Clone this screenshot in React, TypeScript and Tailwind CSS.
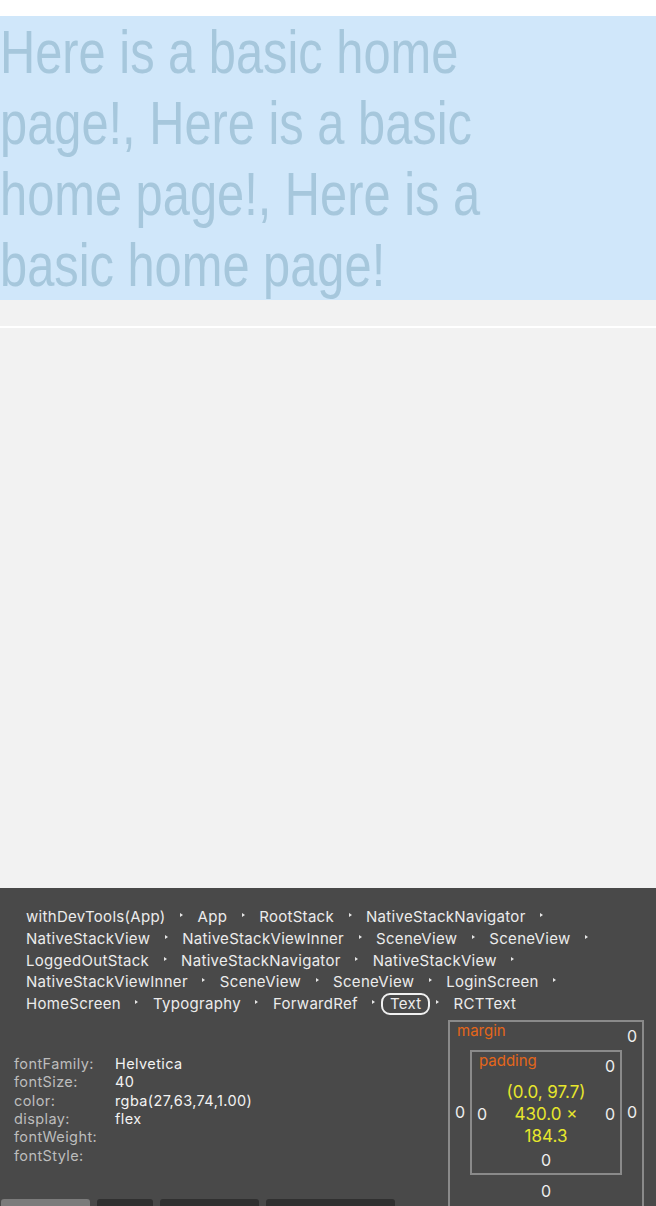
import React from "react";

const crumbs = [
  "withDevTools(App)",
  "App",
  "RootStack",
  "NativeStackNavigator",
  "NativeStackView",
  "NativeStackViewInner",
  "SceneView",
  "SceneView",
  "LoggedOutStack",
  "NativeStackNavigator",
  "NativeStackView",
  "NativeStackViewInner",
  "SceneView",
  "SceneView",
  "LoginScreen",
  "HomeScreen",
  "Typography",
  "ForwardRef",
  "Text",
  "RCTText",
];

const selected = 18;

const styleRows: [string, string][] = [
  ["fontFamily:", "Helvetica"],
  ["fontSize:", "40"],
  ["color:", "rgba(27,63,74,1.00)"],
  ["display:", "flex"],
  ["fontWeight:", ""],
  ["fontStyle:", ""],
];

function Separator() {
  return (
    <span className="w-[14px] flex justify-center pt-[7px] self-start">
      <svg width="3" height="4" viewBox="0 0 3 4">
        <path d="M0 0 L3 2 L0 4 Z" fill="#e6e6e6" />
      </svg>
    </span>
  );
}

function Breadcrumbs() {
  return (
    <div className="flex flex-wrap pl-[17px] pr-[16px] pt-[18px]">
      {crumbs.map((name, i) => (
        <div key={i} className="flex">
          <span
            className={
              "border-2 rounded-[9px] px-[7px] text-[15px] leading-[17.75px] tracking-[0.3px] text-[#ececec] " +
              (i === selected ? "border-[#f0f0f0]" : "border-transparent")
            }
          >
            {name}
          </span>
          {i < crumbs.length - 1 && <Separator />}
        </div>
      ))}
    </div>
  );
}

function BoxModel() {
  return (
    <div className="w-[196px] h-[192px] mr-[12px] mt-[5px] border-2 border-[#8a8a8a] flex flex-col text-[16px] text-[#eeeeee] shrink-0">
      <div className="h-[28px] flex">
        <span className="pl-[7px] leading-[18px] text-[15px] text-[#e4661a]">margin</span>
        <span className="ml-auto w-[20px] self-center text-center leading-[18px]">0</span>
      </div>
      <div className="flex">
        <div className="w-[20px] flex items-center justify-center">0</div>
        <div className="w-[152px] h-[125px] border-2 border-[#8a8a8a] flex flex-col">
          <div className="h-[29px] flex">
            <span className="pl-[7px] leading-[18px] text-[15px] text-[#e4661a]">padding</span>
            <span className="ml-auto w-[20px] self-center text-center leading-[18px]">0</span>
          </div>
          <div className="flex">
            <div className="w-[20px] flex items-center justify-center">0</div>
            <div className="flex-1 flex flex-col items-center text-[17px] leading-[22px] text-[#e6e62c]">
              <span>(0.0, 97.7)</span>
              <span>430.0 ×</span>
              <span>184.3</span>
            </div>
            <div className="w-[20px] flex items-center justify-center">0</div>
          </div>
          <div className="flex-1 flex items-center justify-center">0</div>
        </div>
        <div className="w-[20px] flex items-center justify-center">0</div>
      </div>
      <div className="h-[32px] flex items-center justify-center">0</div>
    </div>
  );
}

export default function App() {
  return (
    <div className="w-[656px] h-[1206px] overflow-hidden flex flex-col bg-[#f2f2f2]">
      <div className="h-[16px] bg-white shrink-0" />
      <div className="bg-[#d0e7fa] h-[284px] overflow-hidden shrink-0">
        <p className="w-[680px] origin-top-left scale-x-[0.787] text-[62px] leading-[71px] text-[#a6c7dc] font-['Liberation_Sans',Arial,sans-serif]">
          Here is a basic home page!, Here is a basic home page!, Here is a basic home page!
        </p>
      </div>
      <div className="h-[26px] shrink-0" />
      <div className="h-[1.5px] bg-white shrink-0" />
      <div className="flex-1" />
      <div className="h-[318px] shrink-0 bg-[#494949] flex flex-col font-['Inter','Noto_Sans',sans-serif]">
        <Breadcrumbs />
        <div className="flex flex-1">
          <div className="flex-1 flex flex-col pt-[40px]">
            <div className="pl-[14px] grid grid-cols-[101px_1fr] text-[14.5px] leading-[18.4px] tracking-[0.4px]">
              {styleRows.map(([k, v]) => (
                <React.Fragment key={k}>
                  <span className="text-[#bdbdbd]">{k}</span>
                  <span className="text-[#f2f2f2]">{v}</span>
                </React.Fragment>
              ))}
            </div>
            <div className="flex gap-[7px] ml-[1px] mt-[34px]">
              <div className="w-[89px] h-[24px] rounded-t-[3px] bg-[#7b7b7b]" />
              <div className="w-[56px] h-[24px] rounded-t-[3px] bg-[#303030]" />
              <div className="w-[99px] h-[24px] rounded-t-[3px] bg-[#303030]" />
              <div className="w-[129px] h-[24px] rounded-t-[3px] bg-[#303030]" />
            </div>
          </div>
          <BoxModel />
        </div>
      </div>
    </div>
  );
}
